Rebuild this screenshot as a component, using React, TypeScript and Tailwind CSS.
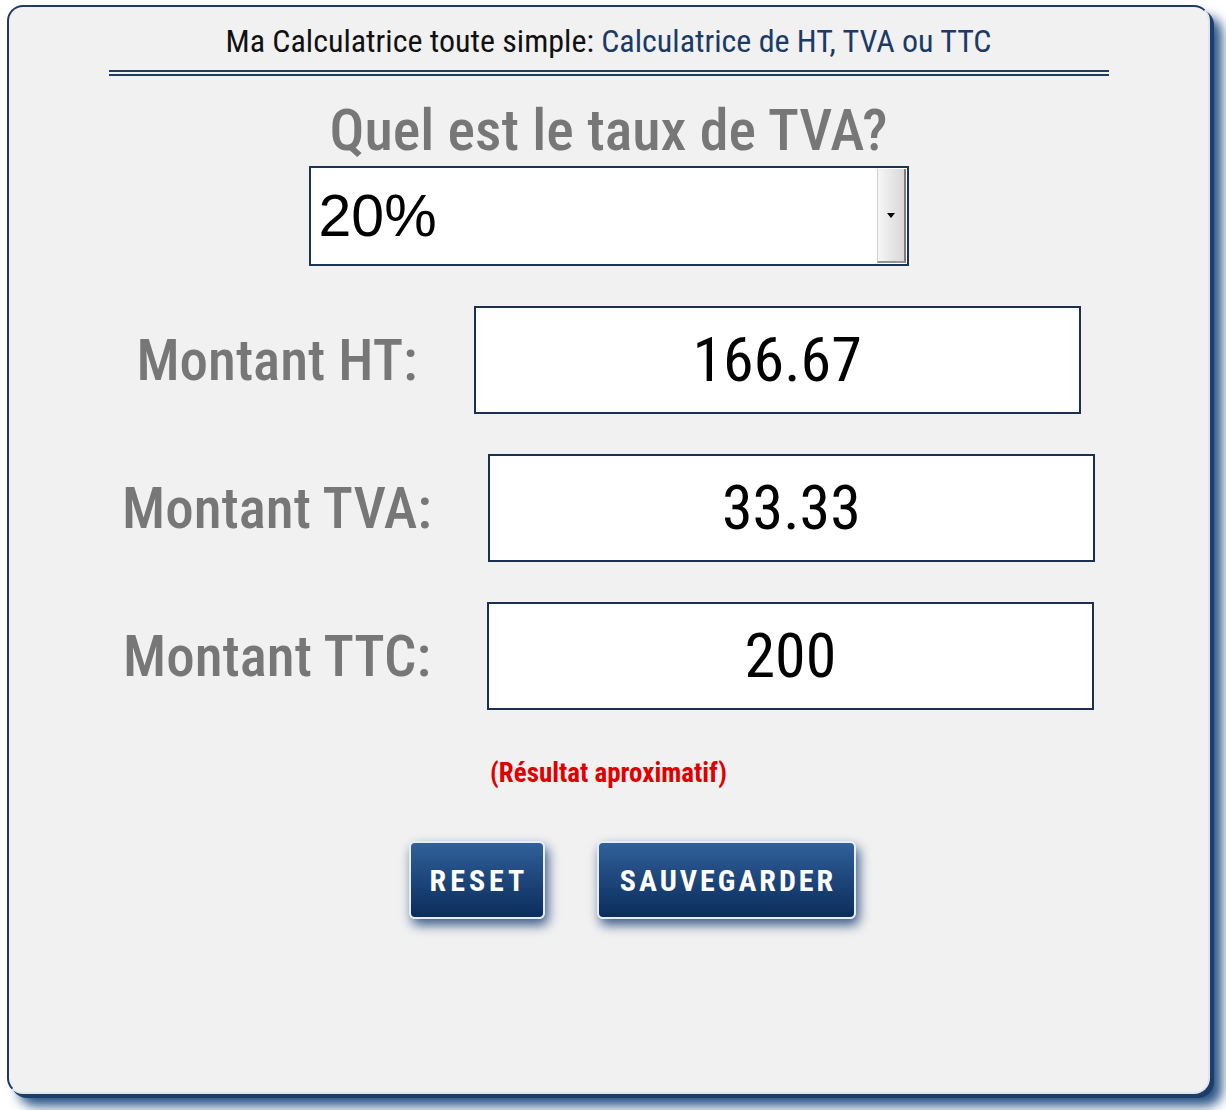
const cond = "font-['Roboto',sans-serif] [font-stretch:condensed]"

const rows = [
  { label: "Montant HT:", value: "166.67" },
  { label: "Montant TVA:", value: "33.33" },
  { label: "Montant TTC:", value: "200" },
]

export default function App() {
  return (
    <div className="min-h-[1110px] bg-white pt-[5px] pl-[7px]">
      <div className="w-[1203px] h-[1089px] rounded-[16px] border-2 border-[#1b3a64] border-b-[#dfe6ee] border-r-[#dfe6ee] bg-[#f1f1f1] shadow-[4px_4px_0_#1c3d6a,12px_12px_12px_#2a5585] flex flex-col items-center">
        {/* Title */}
        <h1 className={`${cond} mt-[18px] text-[32px] leading-none text-[#111]`}>
          Ma Calculatrice toute simple: <span className="text-[#1b3b66]">Calculatrice de HT, TVA ou TTC</span>
        </h1>
        <div className="mt-[13px] w-[1000px] h-[6px] border-y-2 border-[#1c3d66]" />

        {/* Taux */}
        <p className={`${cond} mt-[25px] text-[58px] leading-none font-medium text-[#777]`}>Quel est le taux de TVA?</p>
        <div className="mt-[7px] w-[600px] h-[100px] border-2 border-[#1b3456] bg-white flex items-stretch">
          <div className="flex-1 flex items-center pl-[8px] font-['Liberation_Sans',Arial,sans-serif] text-[59px] leading-none text-black">
            20%
          </div>
          <div className="w-[29px] my-[1px] mr-[1px] border-l border-[#d0d0d0] border-r-2 border-r-[#7d7d7d] border-b-2 border-b-[#939393] bg-gradient-to-r from-[#f6f6f6] to-[#d8d8d8] flex items-center justify-center">
            <div className="w-0 h-0 border-x-[4px] border-x-transparent border-t-[5px] border-t-black" />
          </div>
        </div>

        {/* Montants */}
        <div className="mt-[40px] flex flex-col gap-[40px]">
          {rows.map((r) => (
            <div key={r.label} className="flex items-center justify-center gap-[56px]">
              <span className={`${cond} text-[57px] leading-none font-medium text-[#777]`}>{r.label}</span>
              <div className={`${cond} w-[607px] h-[108px] border-2 border-[#1a3050] bg-white flex items-center justify-center text-[62px] leading-none text-black`}>
                {r.value}
              </div>
            </div>
          ))}
        </div>

        <p className={`${cond} mt-[50px] text-[27px] leading-none font-bold text-[#e00000]`}>(Résultat aproximatif)</p>

        {/* Boutons */}
        <div className="mt-[54px] ml-[48px] flex gap-[52px]">
          <button className={`${cond} w-[136px] h-[78px] rounded-[6px] border-2 border-[#e6edf5] bg-gradient-to-b from-[#30609a] to-[#0b2d5c] shadow-[3px_6px_12px_#3b5b88] text-white font-bold text-[30px] tracking-[4px] pl-[4px]`}>
            RESET
          </button>
          <button className={`${cond} w-[259px] h-[78px] rounded-[6px] border-2 border-[#e6edf5] bg-gradient-to-b from-[#30609a] to-[#0b2d5c] shadow-[3px_6px_12px_#3b5b88] text-white font-bold text-[30px] tracking-[3px] pl-[3px]`}>
            SAUVEGARDER
          </button>
        </div>
      </div>
    </div>
  )
}
